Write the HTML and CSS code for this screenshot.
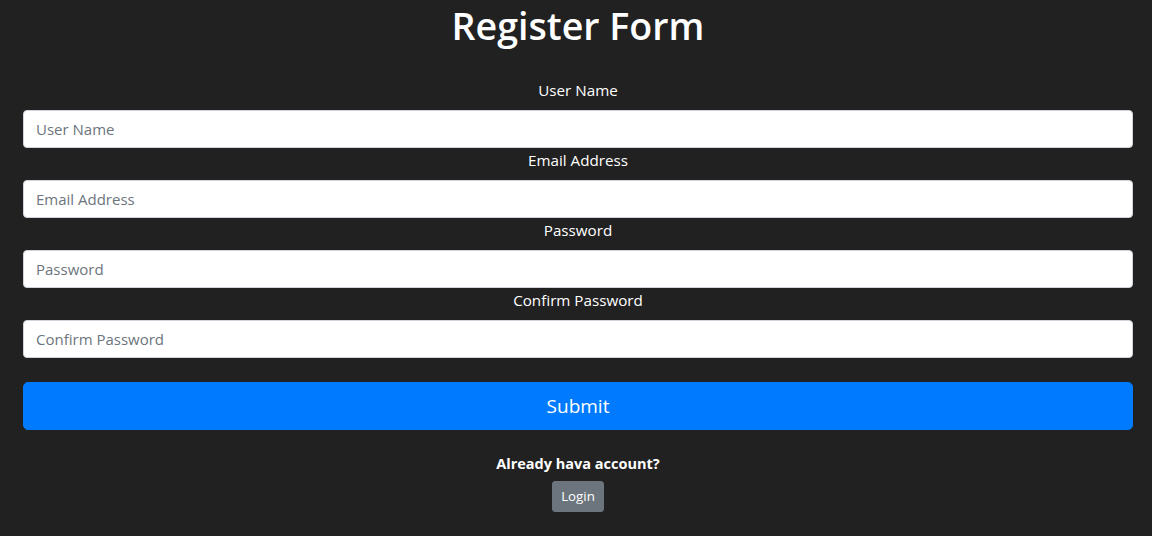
FILE: index.html
```html
<!DOCTYPE html>
<html lang="en">
<head>
<meta charset="utf-8">
<title>Register Form</title>
<link rel="stylesheet" href="styles.css">
</head>
<body>
<main class="page">
  <h1 class="title">Register Form</h1>
  <form class="form">
    <div class="field">
      <label class="label" for="u">User Name</label>
      <input class="input" id="u" type="text" placeholder="User Name">
    </div>
    <div class="field">
      <label class="label" for="e">Email Address</label>
      <input class="input" id="e" type="email" placeholder="Email Address">
    </div>
    <div class="field">
      <label class="label" for="p">Password</label>
      <input class="input" id="p" type="password" placeholder="Password">
    </div>
    <div class="field">
      <label class="label" for="c">Confirm Password</label>
      <input class="input" id="c" type="password" placeholder="Confirm Password">
    </div>
    <button class="submit" type="button">Submit</button>
  </form>
  <div class="footer">
    <p class="question">Already hava account?</p>
    <button class="login" type="button">Login</button>
  </div>
</main>
</body>
</html>
```
FILE: styles.css
```css
html, body {
  margin: 0;
  padding: 0;
  background: #212121;
  color: #ffffff;
  font-family: "Segoe UI", "Open Sans", "Noto Sans", sans-serif;
  font-size: 15.2px;
  line-height: 1.5;
}
.page {
  padding: 0 19px 0 23px;
  display: flex;
  flex-direction: column;
}
.title {
  margin: 0;
  font-size: 37.6px;
  font-weight: 600;
  line-height: 52px;
  text-align: center;
}
.form {
  margin-top: 26px;
  display: flex;
  flex-direction: column;
}
.field {
  display: flex;
  flex-direction: column;
}
.label {
  display: block;
  text-align: center;
  margin-bottom: 8px;
  line-height: 24px;
}
.input {
  box-sizing: border-box;
  height: 38px;
  width: 100%;
  padding: 6px 12px;
  border: 1px solid #ced4da;
  border-radius: 4px;
  background: #fff;
  font: inherit;
  font-size: 15px;
  line-height: 24px;
  color: #495057;
  outline: none;
}
.input::placeholder {
  color: #6c757d;
}
.submit {
  margin-top: 24px;
  height: 48px;
  border: 1px solid #007bff;
  border-radius: 5px;
  background: #007bff;
  color: #fff;
  font-family: inherit;
  font-size: 19px;
  line-height: 30px;
  padding: 8px 16px;
}
.footer {
  margin-top: 22px;
  display: flex;
  flex-direction: column;
  align-items: center;
}
.question {
  margin: 0;
  font-weight: 700;
  font-size: 14.5px;
  line-height: 24px;
}
.login {
  margin-top: 5px;
  height: 31px;
  padding: 4px 8px;
  border: 1px solid #6c757d;
  border-radius: 3px;
  background: #6c757d;
  color: #fff;
  font-family: inherit;
  font-size: 13.3px;
  line-height: 21px;
}
```
